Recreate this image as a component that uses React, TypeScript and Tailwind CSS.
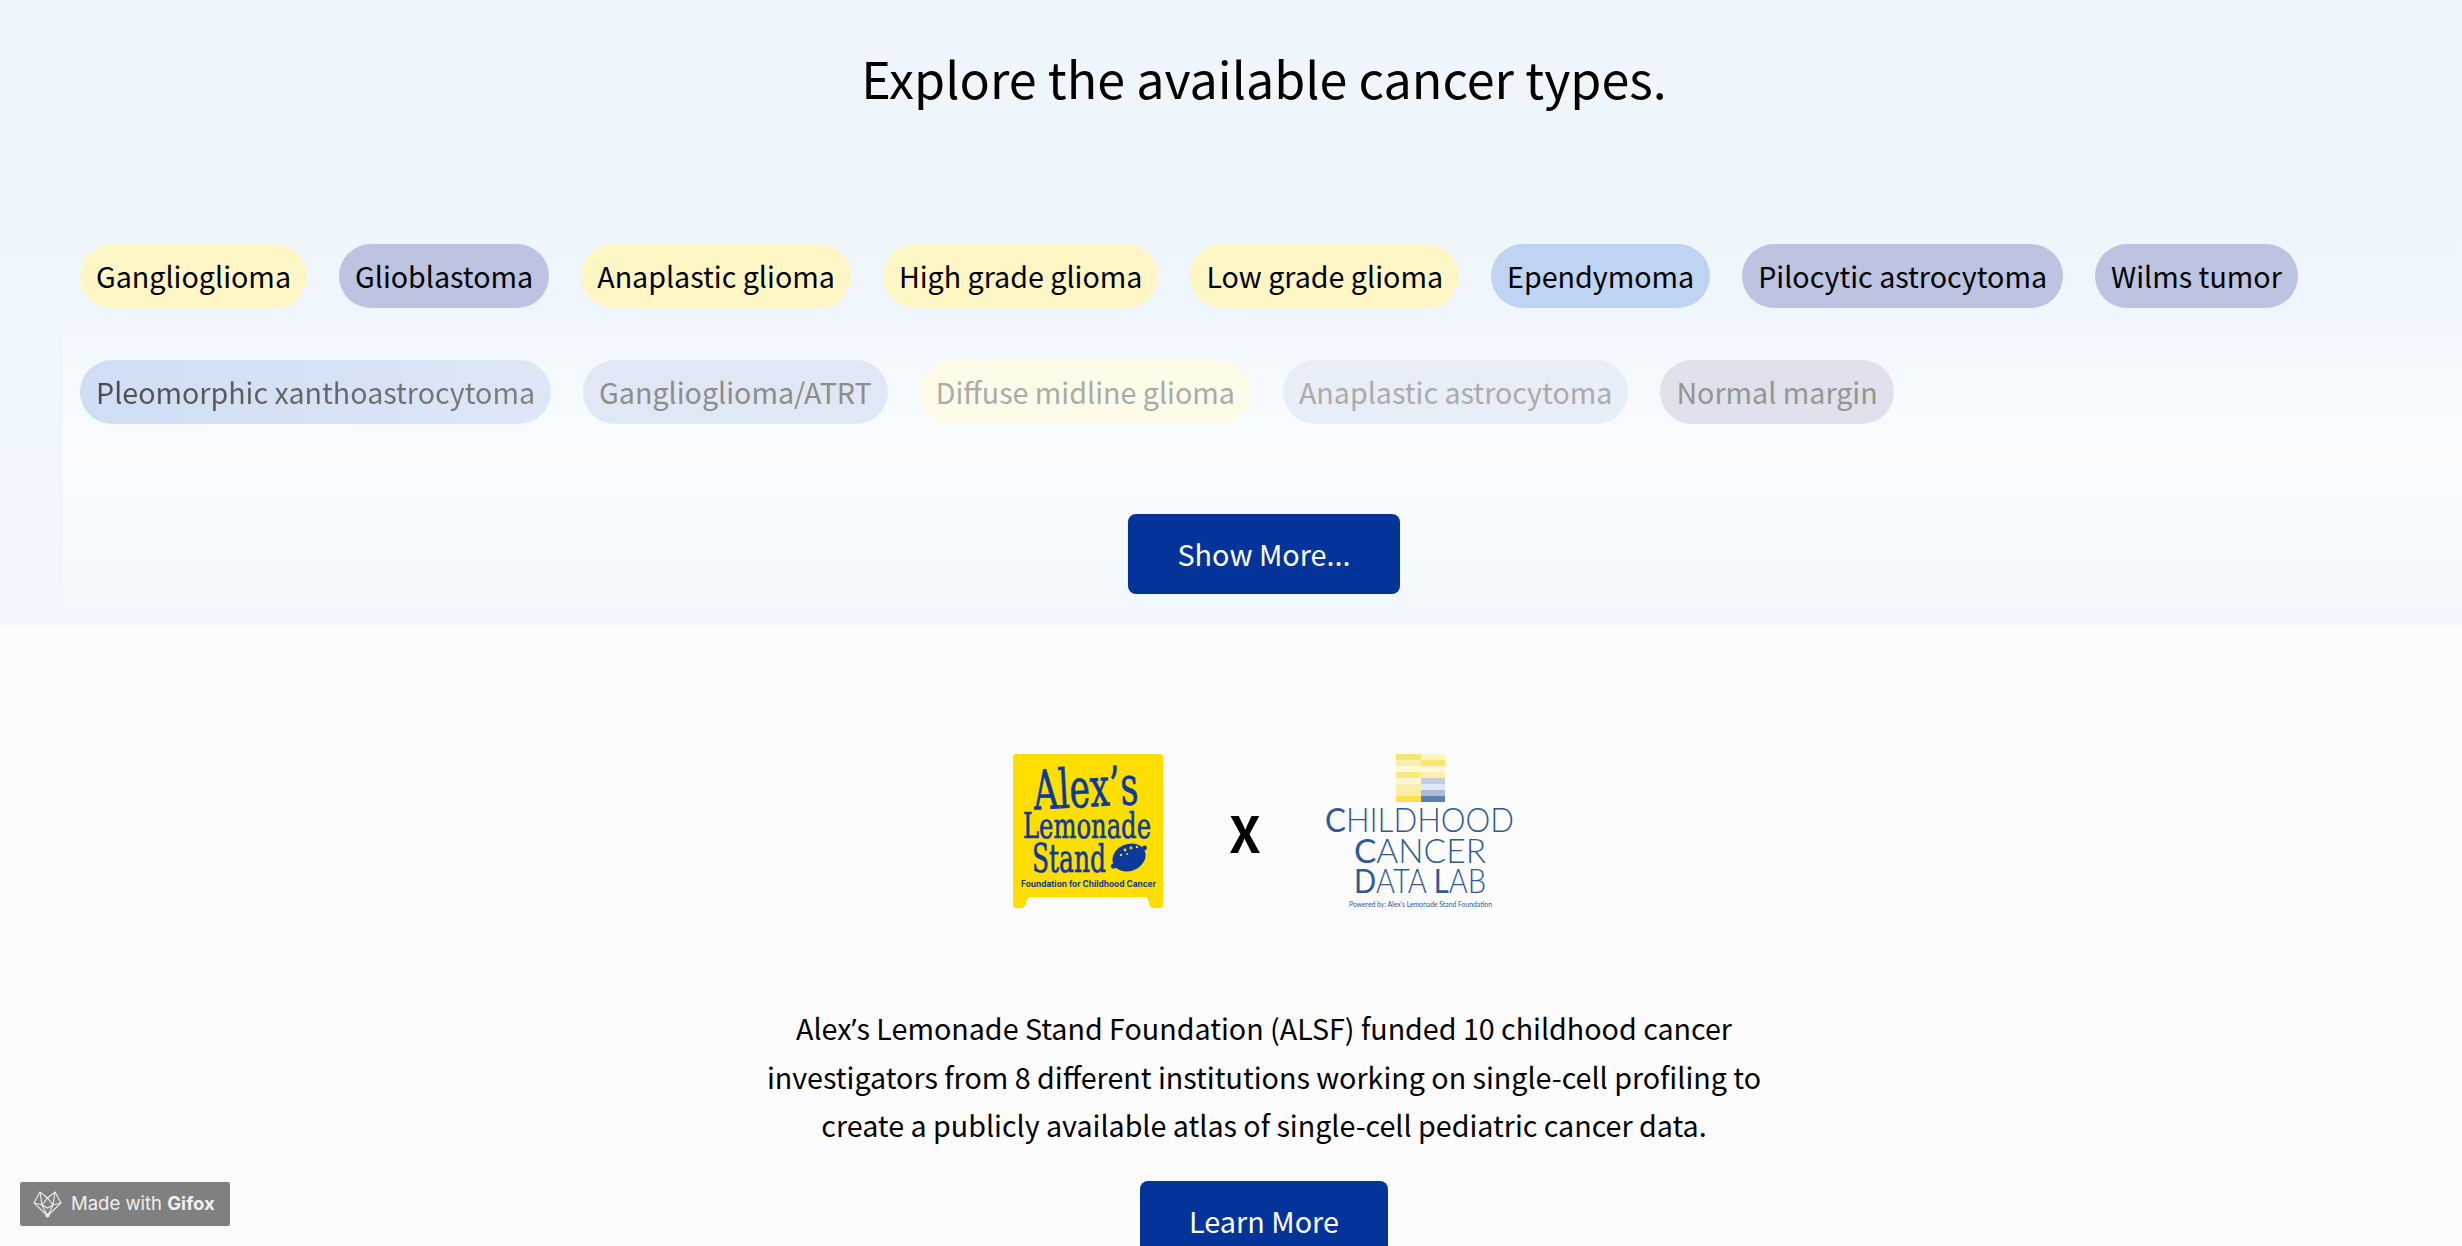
const FONT = "font-['Noto_Sans_CJK_SC','Source_Sans_Pro',sans-serif]";

type Tag = { name: string; color: string; text?: string };

const rowOne: Tag[] = [
  { name: "Ganglioglioma", color: "bg-[#fef6c4]" },
  { name: "Glioblastoma", color: "bg-[#bcc4e2]" },
  { name: "Anaplastic glioma", color: "bg-[#fef6c4]" },
  { name: "High grade glioma", color: "bg-[#fef6c4]" },
  { name: "Low grade glioma", color: "bg-[#fef6c4]" },
  { name: "Ependymoma", color: "bg-[#bfd3f2]" },
  { name: "Pilocytic astrocytoma", color: "bg-[#bcc4e2]" },
  { name: "Wilms tumor", color: "bg-[#bcc4e2]" },
];

// second row is fading out towards the right
const rowTwo: Tag[] = [
  {
    name: "Pleomorphic xanthoastrocytoma",
    color: "bg-gradient-to-r from-[#cfdef5] to-[#dde7f6]",
    text: "bg-gradient-to-r from-[#4c4c4c] to-[#808080] bg-clip-text text-transparent",
  },
  { name: "Ganglioglioma/ATRT", color: "bg-[#e0e8f6]", text: "text-[#8d8d8d]" },
  { name: "Diffuse midline glioma", color: "bg-[#fefbe8]", text: "text-[#ababab]" },
  { name: "Anaplastic astrocytoma", color: "bg-[#e8eef8]", text: "text-[#ababab]" },
  { name: "Normal margin", color: "bg-[#e1e1ee]", text: "text-[#959595]" },
];

function Pill({ tag }: { tag: Tag }) {
  return (
    <span className={`flex h-16 shrink-0 items-center rounded-[32px] px-4 text-[28.65px] whitespace-nowrap ${tag.color}`}>
      <span className={tag.text ?? "text-black"}>{tag.name}</span>
    </span>
  );
}

function AlexLogo() {
  return (
    <svg width="150" height="154" viewBox="0 0 150 154" className="shrink-0">
      <path
        d="M3 0h144a3 3 0 0 1 3 3v148a3 3 0 0 1-3 3h-7a3 3 0 0 1-3-2l-2-6a4 4 0 0 0-4-3H18a4 4 0 0 0-4 3l-2 6a3 3 0 0 1-3 2H3a3 3 0 0 1-3-3V3a3 3 0 0 1 3-3z"
        fill="#ffde00"
      />
      <g fill="#0a3a9c" stroke="#0a3a9c" strokeWidth="0.7" fontFamily="'DejaVu Serif', serif">
        <text x="21" y="53" fontSize="54" textLength="105" lengthAdjust="spacingAndGlyphs" transform="rotate(-3 70 50)">Alex’s</text>
        <text x="10" y="84" fontSize="36" textLength="128" lengthAdjust="spacingAndGlyphs">Lemonade</text>
        <text x="19" y="118" fontSize="40" textLength="74" lengthAdjust="spacingAndGlyphs">Stand</text>
        <text x="8" y="133" fontSize="8.5" fontWeight="700" stroke="none" fontFamily="'Inter', sans-serif" textLength="135" lengthAdjust="spacingAndGlyphs">Foundation for Childhood Cancer</text>
      </g>
      {/* lemon */}
      <ellipse cx="116" cy="103.5" rx="17" ry="13.5" transform="rotate(-22 116 103.5)" fill="#0a3a9c" />
      <circle cx="100.5" cy="112" r="2.6" fill="#0a3a9c" />
      <circle cx="131.5" cy="94" r="2.4" fill="#0a3a9c" />
      <g fill="#ffde00">
        <circle cx="112" cy="96" r="1.4" />
        <circle cx="118" cy="94" r="1.4" />
        <circle cx="124" cy="93" r="1.2" />
        <circle cx="108" cy="101" r="1.2" />
        <circle cx="114" cy="100" r="1" />
      </g>
    </svg>
  );
}

function DataLabLogo() {
  const left = ["#f5e574", "#f5efb0", "#fafad8", "#f6ea80", "#fbf6d8", "#f7f0b0", "#f8efa0", "#ffe04a"];
  const right = ["#fbf6c0", "#fde66a", "#fbf8d8", "#f9f2a8", "#c2cde0", "#e0e8f5", "#aabbd8", "#5f7fb2"];
  return (
    <svg width="190" height="154" viewBox="0 0 190 154" className="shrink-0">
      {left.map((c, i) => (
        <rect key={`l${i}`} x="71" y={i * 6} width="25" height="6" fill={c} />
      ))}
      {right.map((c, i) => (
        <rect key={`r${i}`} x="96" y={i * 6} width="24" height="6" fill={c} />
      ))}
      <g fill="#2f5a96" fontFamily="'Lato', sans-serif" fontWeight="300" fontSize="33">
        <text x="0" y="78" textLength="189" lengthAdjust="spacingAndGlyphs">
          <tspan fontWeight="400">C</tspan>HILDHOOD
        </text>
        <text x="29" y="109" textLength="132" lengthAdjust="spacingAndGlyphs">
          <tspan fontWeight="400">C</tspan>ANCER
        </text>
        <text x="29" y="139" textLength="132" lengthAdjust="spacingAndGlyphs">
          <tspan fontWeight="400">D</tspan>ATA <tspan fontWeight="400">L</tspan>AB
        </text>
        <text x="24" y="153" fontSize="8" fontWeight="400" textLength="143" lengthAdjust="spacingAndGlyphs">Powered by: Alex's Lemonade Stand Foundation</text>
      </g>
    </svg>
  );
}

function GifoxBadge() {
  return (
    <div className="fixed bottom-[20px] left-[20px] flex h-[44px] w-[210px] items-center gap-[9px] rounded-[2px] bg-[#808080] pl-[13px] font-['Inter',sans-serif] text-[18.5px] text-[#f0f0f0]">
      <svg width="29" height="27" viewBox="0 0 29 27" fill="none" stroke="#f0f0f0" strokeWidth="1.1" className="shrink-0">
        <path d="M1 12 7 1l7.500 6L22 1l6 11-13.500 13z" />
        <path d="M7 1l2 13 5.500 11L20 14l2-13M1 12l8 2 5.500-7L20 14l8-2M9 14l5.500 3 5.500-3" />
        <circle cx="14.500" cy="24.500" r="2" fill="#f0f0f0" stroke="none" />
      </svg>
      <span className="whitespace-nowrap">Made with <b>Gifox</b></span>
    </div>
  );
}

export default function App() {
  return (
    <div className={`h-[1246px] overflow-hidden bg-[#fcfcfc] ${FONT}`}>
      {/* Cancer types */}
      <section className="relative flex h-[625px] flex-col items-center bg-[linear-gradient(to_bottom,#eef6fc_0%,#eff7fc_50%,#f2f7fc_100%)] pl-[66px]">
        <h2 className="relative mt-[39px] text-[50.2px] leading-[76px] font-normal whitespace-nowrap text-black">Explore the available cancer types.</h2>
        {/* lighter panel behind the fading rows */}
        <div className="absolute top-[300px] right-0 bottom-[18px] left-[63px] bg-gradient-to-b from-white/0 via-white/70 to-white/10" />
        <div className="relative mt-[129px] flex w-full flex-col gap-[52px] pl-[14px]">
          <div className="flex gap-8">
            {rowOne.map((t) => <Pill key={t.name} tag={t} />)}
          </div>
          <div className="flex gap-8">
            {rowTwo.map((t) => <Pill key={t.name} tag={t} />)}
          </div>
        </div>
        <button className="relative mt-[90px] h-20 w-[272px] shrink-0 rounded-lg bg-[#04349a] text-[28.8px] text-white">Show More...</button>
      </section>

      {/* ALSF */}
      <section className="flex flex-col items-center pl-[66px]">
        <div className="mt-[129px] flex items-center">
          <AlexLogo />
          <span className="mr-[64px] ml-[66px] text-[50px] leading-none font-bold text-black">X</span>
          <DataLabLogo />
        </div>
        <p className="mt-[96px] w-[1010px] text-center text-[28.65px] leading-[48px] text-black">
          Alex<span className="font-['Noto_Sans',sans-serif]">’</span>s Lemonade Stand Foundation (ALSF) funded 10 childhood cancer investigators from 8 different institutions working on single-cell profiling to create a publicly available atlas of single-cell pediatric cancer data.
        </p>
        <button className="mt-[32px] h-20 w-[248px] shrink-0 rounded-lg bg-[#04349a] text-[28.8px] text-white">Learn More</button>
      </section>

      <GifoxBadge />
    </div>
  );
}
